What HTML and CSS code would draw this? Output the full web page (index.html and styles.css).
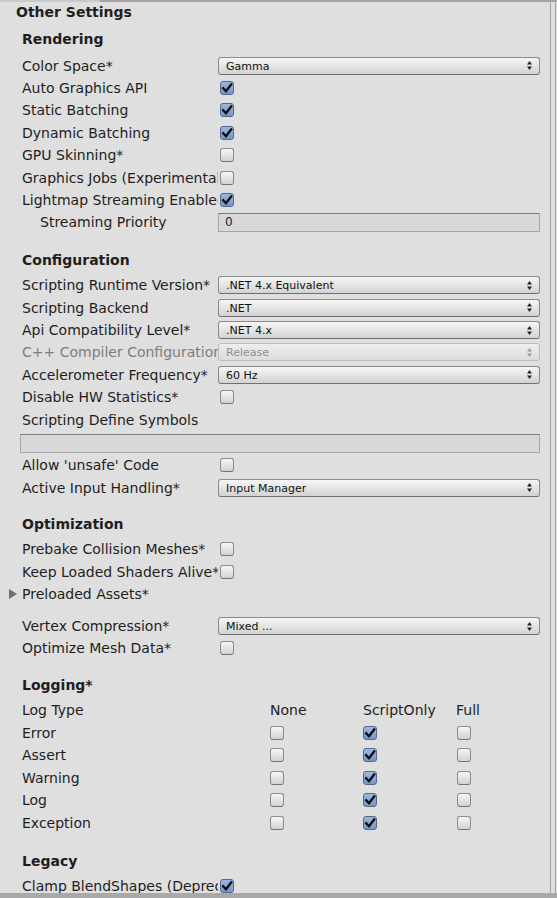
FILE: index.html
```html
<!DOCTYPE html>
<html>
<head>
<meta charset="utf-8">
<link rel="stylesheet" href="styles.css">
</head>
<body>
<div class="window">
  <div class="topline"><span class="tl-left"></span><span class="tl-right"></span></div>
  <div class="body">
    <div class="content">
      <div class="main-title">Other Settings</div>

      <div class="section first">
        <div class="sec-title">Rendering</div>
        <div class="row"><div class="label">Color Space*</div><div class="ctrl"><div class="dropdown"><span>Gamma</span><svg class="arr" width="5" height="9" viewBox="0 0 5 9"><path d="M2.5 0 L5 3.5 L0 3.5 Z M0 5.5 L5 5.5 L2.5 9 Z" fill="#222"/></svg></div></div></div>
        <div class="row"><div class="label">Auto Graphics API</div><div class="ctrl"><span class="cb on"><svg width="14" height="14" viewBox="0 0 14 14"><path d="M3.2 7.2 L6 10.2 L11.2 3.4" fill="none" stroke="#0d0d0d" stroke-width="2.3" stroke-linecap="square"/></svg></span></div></div>
        <div class="row"><div class="label">Static Batching</div><div class="ctrl"><span class="cb on"><svg width="14" height="14" viewBox="0 0 14 14"><path d="M3.2 7.2 L6 10.2 L11.2 3.4" fill="none" stroke="#0d0d0d" stroke-width="2.3" stroke-linecap="square"/></svg></span></div></div>
        <div class="row"><div class="label">Dynamic Batching</div><div class="ctrl"><span class="cb on"><svg width="14" height="14" viewBox="0 0 14 14"><path d="M3.2 7.2 L6 10.2 L11.2 3.4" fill="none" stroke="#0d0d0d" stroke-width="2.3" stroke-linecap="square"/></svg></span></div></div>
        <div class="row"><div class="label">GPU Skinning*</div><div class="ctrl"><span class="cb"></span></div></div>
        <div class="row"><div class="label">Graphics Jobs (Experimental)</div><div class="ctrl"><span class="cb"></span></div></div>
        <div class="row"><div class="label">Lightmap Streaming Enabled</div><div class="ctrl"><span class="cb on"><svg width="14" height="14" viewBox="0 0 14 14"><path d="M3.2 7.2 L6 10.2 L11.2 3.4" fill="none" stroke="#0d0d0d" stroke-width="2.3" stroke-linecap="square"/></svg></span></div></div>
        <div class="row"><div class="label indent">Streaming Priority</div><div class="ctrl"><div class="field">0</div></div></div>
      </div>

      <div class="section config">
        <div class="sec-title">Configuration</div>
        <div class="row"><div class="label">Scripting Runtime Version*</div><div class="ctrl"><div class="dropdown"><span>.NET 4.x Equivalent</span><svg class="arr" width="5" height="9" viewBox="0 0 5 9"><path d="M2.5 0 L5 3.5 L0 3.5 Z M0 5.5 L5 5.5 L2.5 9 Z" fill="#222"/></svg></div></div></div>
        <div class="row"><div class="label">Scripting Backend</div><div class="ctrl"><div class="dropdown"><span>.NET</span><svg class="arr" width="5" height="9" viewBox="0 0 5 9"><path d="M2.5 0 L5 3.5 L0 3.5 Z M0 5.5 L5 5.5 L2.5 9 Z" fill="#222"/></svg></div></div></div>
        <div class="row"><div class="label">Api Compatibility Level*</div><div class="ctrl"><div class="dropdown"><span>.NET 4.x</span><svg class="arr" width="5" height="9" viewBox="0 0 5 9"><path d="M2.5 0 L5 3.5 L0 3.5 Z M0 5.5 L5 5.5 L2.5 9 Z" fill="#222"/></svg></div></div></div>
        <div class="row"><div class="label disabled">C++ Compiler Configuration</div><div class="ctrl"><div class="dropdown dis"><span>Release</span><svg class="arr" width="5" height="9" viewBox="0 0 5 9"><path d="M2.5 0 L5 3.5 L0 3.5 Z M0 5.5 L5 5.5 L2.5 9 Z" fill="#9a9a9a"/></svg></div></div></div>
        <div class="row"><div class="label">Accelerometer Frequency*</div><div class="ctrl"><div class="dropdown"><span>60 Hz</span><svg class="arr" width="5" height="9" viewBox="0 0 5 9"><path d="M2.5 0 L5 3.5 L0 3.5 Z M0 5.5 L5 5.5 L2.5 9 Z" fill="#222"/></svg></div></div></div>
        <div class="row"><div class="label">Disable HW Statistics*</div><div class="ctrl"><span class="cb"></span></div></div>
        <div class="row"><div class="label wide">Scripting Define Symbols</div></div>
        <div class="row fieldrow"><div class="field full"></div></div>
        <div class="row"><div class="label">Allow 'unsafe' Code</div><div class="ctrl"><span class="cb"></span></div></div>
        <div class="row lastcfg"><div class="label">Active Input Handling*</div><div class="ctrl"><div class="dropdown"><span>Input Manager</span><svg class="arr" width="5" height="9" viewBox="0 0 5 9"><path d="M2.5 0 L5 3.5 L0 3.5 Z M0 5.5 L5 5.5 L2.5 9 Z" fill="#222"/></svg></div></div></div>
      </div>

      <div class="section optim">
        <div class="sec-title">Optimization</div>
        <div class="row"><div class="label">Prebake Collision Meshes*</div><div class="ctrl"><span class="cb"></span></div></div>
        <div class="row"><div class="label">Keep Loaded Shaders Alive*</div><div class="ctrl"><span class="cb"></span></div></div>
        <div class="row foldrow"><svg class="fold" width="8" height="10" viewBox="0 0 8 10"><path d="M0 0 L8 5 L0 10 Z" fill="#6e6e6e"/></svg><div class="label wide">Preloaded Assets*</div></div>
        <div class="row vertex"><div class="label">Vertex Compression*</div><div class="ctrl"><div class="dropdown"><span>Mixed ...</span><svg class="arr" width="5" height="9" viewBox="0 0 5 9"><path d="M2.5 0 L5 3.5 L0 3.5 Z M0 5.5 L5 5.5 L2.5 9 Z" fill="#222"/></svg></div></div></div>
        <div class="row"><div class="label">Optimize Mesh Data*</div><div class="ctrl"><span class="cb"></span></div></div>
      </div>

      <div class="section logging">
        <div class="sec-title">Logging*</div>
        <div class="row lrow"><div class="lname">Log Type</div><div class="lcol">None</div><div class="lcol">ScriptOnly</div><div class="lcol">Full</div></div>
        <div class="row lrow"><div class="lname">Error</div><div class="lcol"><span class="cb"></span></div><div class="lcol"><span class="cb on"><svg width="14" height="14" viewBox="0 0 14 14"><path d="M3.2 7.2 L6 10.2 L11.2 3.4" fill="none" stroke="#0d0d0d" stroke-width="2.3" stroke-linecap="square"/></svg></span></div><div class="lcol"><span class="cb"></span></div></div>
        <div class="row lrow"><div class="lname">Assert</div><div class="lcol"><span class="cb"></span></div><div class="lcol"><span class="cb on"><svg width="14" height="14" viewBox="0 0 14 14"><path d="M3.2 7.2 L6 10.2 L11.2 3.4" fill="none" stroke="#0d0d0d" stroke-width="2.3" stroke-linecap="square"/></svg></span></div><div class="lcol"><span class="cb"></span></div></div>
        <div class="row lrow"><div class="lname">Warning</div><div class="lcol"><span class="cb"></span></div><div class="lcol"><span class="cb on"><svg width="14" height="14" viewBox="0 0 14 14"><path d="M3.2 7.2 L6 10.2 L11.2 3.4" fill="none" stroke="#0d0d0d" stroke-width="2.3" stroke-linecap="square"/></svg></span></div><div class="lcol"><span class="cb"></span></div></div>
        <div class="row lrow"><div class="lname">Log</div><div class="lcol"><span class="cb"></span></div><div class="lcol"><span class="cb on"><svg width="14" height="14" viewBox="0 0 14 14"><path d="M3.2 7.2 L6 10.2 L11.2 3.4" fill="none" stroke="#0d0d0d" stroke-width="2.3" stroke-linecap="square"/></svg></span></div><div class="lcol"><span class="cb"></span></div></div>
        <div class="row lrow"><div class="lname">Exception</div><div class="lcol"><span class="cb"></span></div><div class="lcol"><span class="cb on"><svg width="14" height="14" viewBox="0 0 14 14"><path d="M3.2 7.2 L6 10.2 L11.2 3.4" fill="none" stroke="#0d0d0d" stroke-width="2.3" stroke-linecap="square"/></svg></span></div><div class="lcol"><span class="cb"></span></div></div>
      </div>

      <div class="section legacy">
        <div class="sec-title">Legacy</div>
        <div class="row"><div class="label">Clamp BlendShapes (Deprecated)*</div><div class="ctrl"><span class="cb on"><svg width="14" height="14" viewBox="0 0 14 14"><path d="M3.2 7.2 L6 10.2 L11.2 3.4" fill="none" stroke="#0d0d0d" stroke-width="2.3" stroke-linecap="square"/></svg></span></div></div>
      </div>
    </div>
    <div class="edge"></div>
  </div>
  <div class="bottomband"></div>
</div>
</body>
</html>
```
FILE: styles.css
```css
html, body {
  margin: 0;
  padding: 0;
}
body {
  background: #dfdfdf;
  font-family: "DejaVu Sans", "Noto Sans", sans-serif;
  font-size: 14px;
  color: #1e1e1e;
  width: 557px;
  height: 898px;
  overflow: hidden;
}
.window {
  width: 557px;
  height: 898px;
  display: flex;
  flex-direction: column;
}
.topline {
  display: flex;
  height: 2px;
  flex: none;
}
.tl-left {
  width: 100px;
  background: #c9c9c9;
}
.tl-right {
  flex: 1;
  background: #a4a4a4;
}
.body {
  flex: 1;
  display: flex;
  overflow: hidden;
}
.content {
  width: 551px;
  box-sizing: border-box;
  border-right: 1px solid #a2a2a2;
  overflow: hidden;
}
.edge {
  width: 5px;
  box-sizing: border-box;
  border-right: 1px solid #a2a2a2;
}
.bottomband {
  height: 5px;
  flex: none;
  background: #a9a9a9;
}
.main-title {
  font-weight: bold;
  height: 20px;
  line-height: 20px;
  padding-left: 16px;
}
.section {
  margin-top: 15px;
}
.section.first {
  margin-top: 6px;
}
.section.config {
  margin-top: 15.5px;
}
.section.optim {
  margin-top: 14px;
}
.section.logging {
  margin-top: 14px;
}
.section.legacy {
  margin-top: 16px;
}
.sec-title {
  font-weight: bold;
  height: 25px;
  line-height: 22px;
  padding-left: 22px;
}
.section.first .sec-title {
  height: 26.5px;
}
.row {
  display: flex;
  align-items: center;
  height: 22.4px;
  padding-left: 22px;
}
.label {
  width: 196px;
  flex: none;
  white-space: nowrap;
  overflow: hidden;
  line-height: 22px;
}
.label.indent {
  padding-left: 18px;
  box-sizing: border-box;
}
.label.wide {
  width: auto;
  overflow: visible;
}
.label.disabled {
  color: #7d7d7d;
}
.ctrl {
  width: 322px;
  flex: none;
  display: flex;
  align-items: center;
}
.dropdown {
  width: 100%;
  height: 18px;
  box-sizing: border-box;
  border: 1px solid #8a8a8a;
  border-bottom-color: #707070;
  border-radius: 3px;
  background: linear-gradient(#f6f6f6, #e4e4e4 50%, #d3d3d3);
  font-size: 11px;
  color: #111;
  padding: 0 7px 0 7px;
  display: flex;
  align-items: center;
  justify-content: space-between;
}
.dropdown span {
  padding-top: 1px;
}
.dropdown.dis {
  border-color: #bcbcbc;
  color: #8e8e8e;
  background: linear-gradient(#eeeeee, #dcdcdc);
}
.arr {
  flex: none;
}
.cb {
  width: 14px;
  height: 14px;
  box-sizing: border-box;
  margin-left: 2px;
  border: 1px solid #8c8c8c;
  border-bottom-color: #747474;
  border-radius: 3px;
  background: linear-gradient(#f7f7f7, #e2e2e2 55%, #d2d2d2);
  display: inline-flex;
  position: relative;
  overflow: visible;
}
.cb.on {
  background: linear-gradient(#9cb8e0, #7596c8);
  border-color: #56688a;
}
.cb svg {
  position: absolute;
  left: -1px;
  top: -1px;
}
.field {
  width: 100%;
  height: 19px;
  box-sizing: border-box;
  border: 1px solid #a6a6a6;
  border-top-color: #7c7c7c;
  background: #d8d8d8;
  font-size: 12px;
  line-height: 17px;
  padding-left: 6px;
  color: #222;
}
.fieldrow {
  height: 23px;
  padding-left: 20px;
  align-items: flex-start;
}
.field.full {
  width: 520px;
  margin-top: 3px;
}
.lastcfg {
  margin-top: 0.5px;
}
.foldrow {
  position: relative;
}
.fold {
  position: absolute;
  left: 9px;
  top: 6px;
}
.vertex {
  margin-top: 9.6px;
}
.lrow {
  height: 22.6px;
}
.lname {
  width: 248px;
  flex: none;
  line-height: 22px;
}
.lcol {
  width: 93px;
  flex: none;
  display: flex;
  align-items: center;
  line-height: 22px;
}
.lcol .cb {
  margin-left: 0;
}
.lcol:last-child .cb {
  margin-left: 1px;
}
```
